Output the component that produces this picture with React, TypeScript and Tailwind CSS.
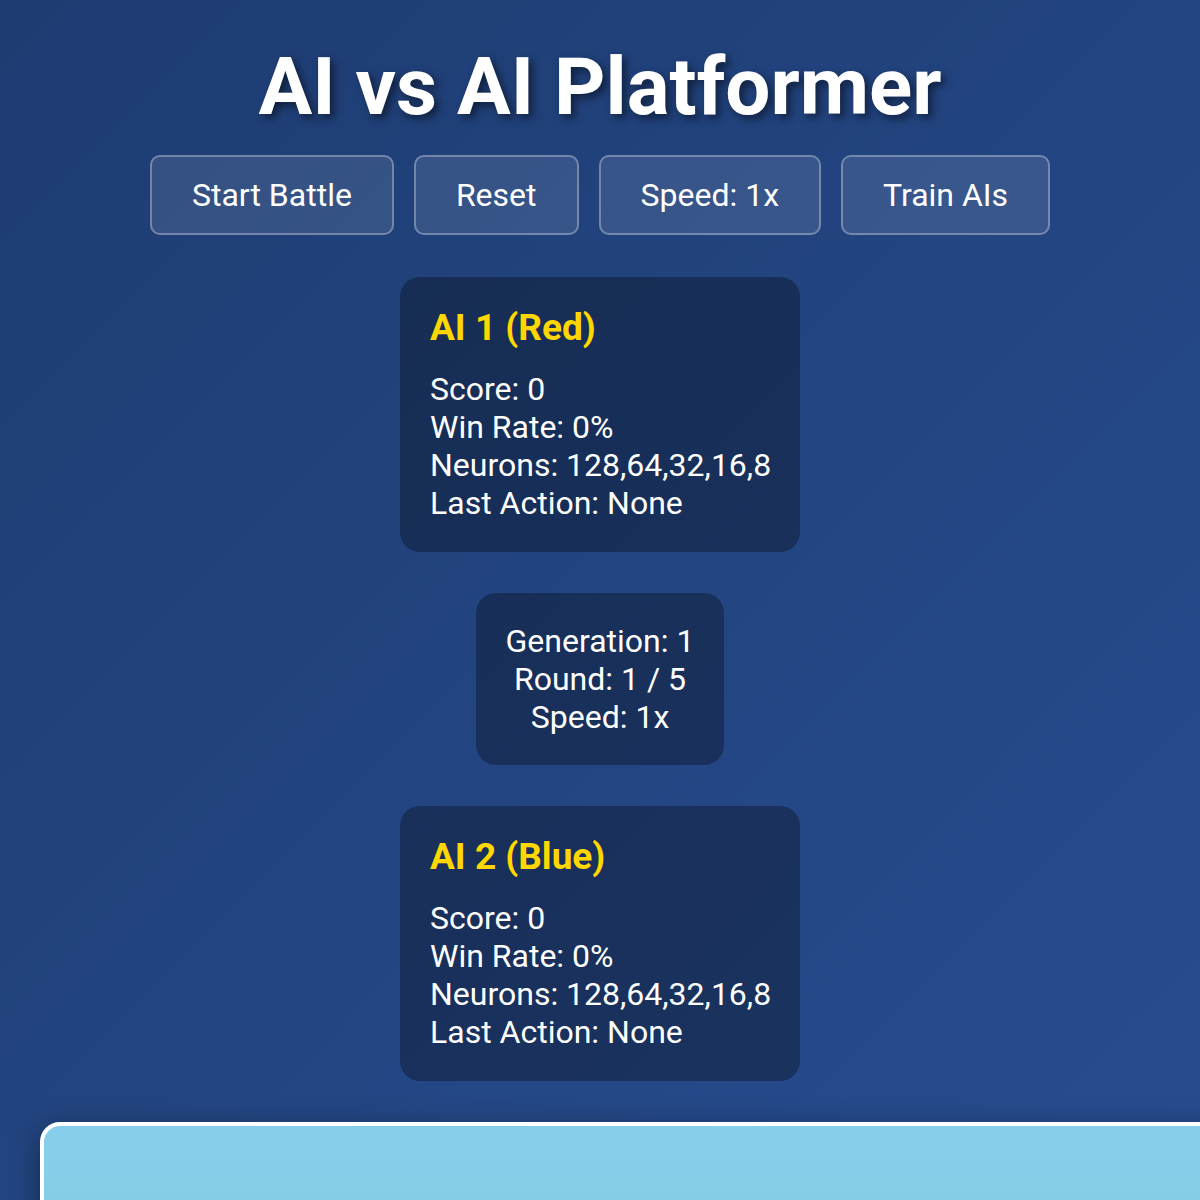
const ais = [
  { name: "AI 1 (Red)", score: 0, winRate: "0%", neurons: "128,64,32,16,8", lastAction: "None" },
  { name: "AI 2 (Blue)", score: 0, winRate: "0%", neurons: "128,64,32,16,8", lastAction: "None" },
];

function AiPanel({ ai }: { ai: (typeof ais)[number] }) {
  return (
    <div className="w-[400px] rounded-[20px] bg-black/30 p-[30px] text-left">
      <h3 className="mb-[21px] text-[37px] font-bold leading-[42px] text-[#ffd700]">{ai.name}</h3>
      <div className="whitespace-nowrap text-[32px] leading-[38px] text-white">
        <p>Score: {ai.score}</p>
        <p>Win Rate: {ai.winRate}</p>
        <p>Neurons: {ai.neurons}</p>
        <p>Last Action: {ai.lastAction}</p>
      </div>
    </div>
  );
}

export default function App() {
  const buttons = ["Start Battle", "Reset", "Speed: 1x", "Train AIs"];

  return (
    <div
      className="min-h-screen w-full overflow-hidden bg-[linear-gradient(135deg,#1e3c72,#2a5298)] px-[40px] pt-[40px] pb-[40px] text-white"
      style={{ fontFamily: "Roboto, 'Liberation Sans', sans-serif" }}
    >
      <h1 className="text-center text-[80px] font-bold leading-[94px] [text-shadow:4px_4px_8px_rgba(0,0,0,0.5)]">
        AI vs AI Platformer
      </h1>

      <div className="mt-[21px] flex justify-center gap-[20px]">
        {buttons.map((b) => (
          <button
            key={b}
            className="rounded-[10px] border-2 border-white/30 bg-white/10 px-[40px] py-[19px] text-[32px] leading-[38px] text-white"
          >
            {b}
          </button>
        ))}
      </div>

      <div className="mt-[42px] flex flex-col items-center gap-[41px]">
        <AiPanel ai={ais[0]} />
        <div className="rounded-[20px] bg-black/30 px-[30px] py-[29px] text-center text-[32px] leading-[38px]">
          <p>Generation: 1</p>
          <p>Round: 1 / 5</p>
          <p>Speed: 1x</p>
        </div>
        <AiPanel ai={ais[1]} />
      </div>

      <div className="mt-[41px] h-[800px] w-[1600px] rounded-[20px] border-4 border-white bg-[linear-gradient(180deg,#87ceeb,#7ec8d8_40%,#98fb98)] shadow-[0_8px_30px_rgba(0,0,0,0.4)]" />
    </div>
  );
}
